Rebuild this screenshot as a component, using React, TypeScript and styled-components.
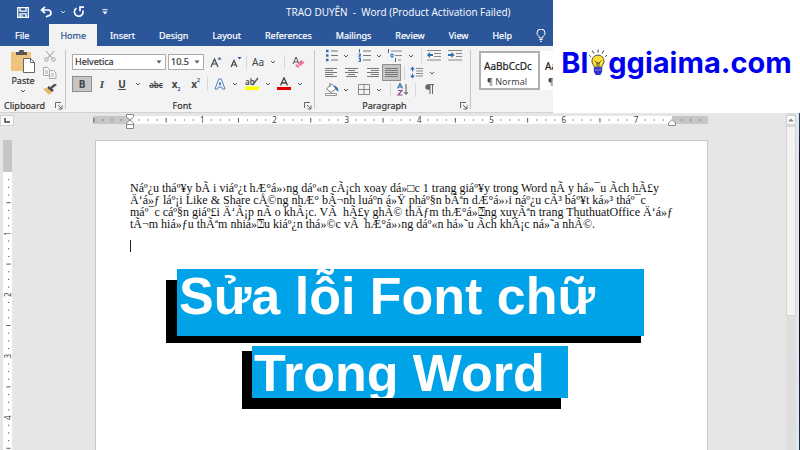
import React from 'react';
import styled, { createGlobalStyle, css } from 'styled-components';

const Global = createGlobalStyle`
  *, *::before, *::after { box-sizing: border-box; }
  html, body, #root { height: 100%; }
  body {
    margin: 0;
    overflow: hidden;
    background: #e6e6e6;
    font-family: "Noto Sans", "Open Sans", sans-serif;
    font-size: 9px;
    color: #444;
  }
  button, select, a { font: inherit; color: inherit; }
  h1, h2, p { margin: 0; }
`;

const Shell = styled.div`
  display: flex;
  flex-direction: column;
  min-height: 100vh;
`;

const Header = styled.header`
  display: grid;
  grid-template-columns: minmax(0, 1fr) 247px;
`;

const WordChrome = styled.div`
  display: flex;
  flex-direction: column;
  overflow: hidden;
`;

const TitleBar = styled.div`
  display: flex;
  align-items: center;
  height: 24px;
  padding-left: 16px;
  background: #2b579a;
  color: #fff;
`;

const Quick = styled.button<{ $w: number }>`
  display: flex;
  justify-content: center;
  align-items: center;
  flex: none;
  width: ${(p) => p.$w}px;
  height: 16px;
  padding: 0;
  border: 0;
  background: none;
  & > svg { flex: none; }
`;

const WindowTitle = styled.h1`
  margin-left: 169px;
  font-family: "Open Sans", sans-serif;
  font-size: 10px;
  font-weight: 400;
  line-height: 12px;
  white-space: pre;
`;

const Tabs = styled.nav`
  display: flex;
  height: 22px;
  padding-left: 4px;
  background: #2b579a;
  color: #fff;
`;

const Tab = styled.a<{ $active?: boolean; $lead?: boolean }>`
  display: flex;
  align-items: center;
  flex: none;
  padding: 0 11px;
  margin-right: ${(p) => (p.$lead ? 9 : 2)}px;
  font-size: 9px;
  text-decoration: none;
  -webkit-text-stroke: 0.2px;
  ${(p) => p.$active && css`
    background: #f3f3f3;
    color: #2b579a;
  `}
`;

const Ribbon = styled.div`
  display: flex;
  height: 67px;
  background: #f3f3f3;
  border-bottom: 1px solid #d2d2d2;
`;

const Group = styled.section<{ $w: number }>`
  display: flex;
  flex-direction: column;
  flex: none;
  width: ${(p) => p.$w}px;
  padding-top: 1px;
`;

const GroupDivider = styled.div`
  flex: none;
  width: 1px;
  margin: 4px 0 3px;
  background: #c6c6c6;
`;

const GroupBody = styled.div<{ $split?: boolean }>`
  display: flex;
  flex-direction: ${(p) => (p.$split ? 'row' : 'column')};
  height: 52px;
  padding-left: ${(p) => (p.$split ? 4 : 8)}px;
`;

const FontRows = styled(GroupBody)`
  gap: 6px;
  padding: 7px 0 0 6px;
`;

const GroupFoot = styled.div`
  display: grid;
  grid-template-columns: minmax(0, 1fr) 16px;
  align-items: center;
  height: 13px;
  font-size: 9px;
  text-align: center;
  color: #333;
  -webkit-text-stroke: 0.2px;
  & > svg { justify-self: end; margin-right: 2px; }
`;

const Row = styled.div<{ $h: number }>`
  display: flex;
  align-items: center;
  flex: none;
  height: ${(p) => p.$h}px;
`;

const Tool = styled.button<{ $w: number; $on?: boolean }>`
  display: flex;
  justify-content: center;
  align-items: center;
  flex: none;
  width: ${(p) => p.$w}px;
  height: 100%;
  padding: 0;
  border: ${(p) => (p.$on ? '1px solid #8e8e8e' : '0')};
  background: ${(p) => (p.$on ? '#c6c6c6' : 'none')};
  color: #444;
`;

const Sep = styled.span<{ $before?: number }>`
  flex: none;
  width: 1px;
  height: 14px;
  margin-left: ${(p) => p.$before ?? 0}px;
  background: #d6d6d6;
`;

const Field = styled.label<{ $w: number }>`
  display: flex;
  align-items: center;
  flex: none;
  width: ${(p) => p.$w}px;
  height: 16px;
  margin-right: 2px;
  padding-right: 3px;
  border: 1px solid #ababab;
  background: #fff;
`;

const Picker = styled.select`
  flex: 1;
  min-width: 0;
  height: 14px;
  padding: 0 0 0 2px;
  border: 0;
  appearance: none;
  background: none;
  font-size: 9px;
  line-height: 14px;
  color: #333;
  -webkit-text-stroke: 0.2px;
`;

const PasteButton = styled.button`
  display: flex;
  flex-direction: column;
  align-items: center;
  width: 38px;
  padding: 3px 0 0;
  border: 0;
  background: none;
  font-size: 9px;
  line-height: 14px;
  color: #333;
  -webkit-text-stroke: 0.2px;
`;

const ClipTools = styled.div`
  display: flex;
  flex-direction: column;
  width: 18px;
`;

const Gallery = styled.div`
  display: flex;
  flex: 1;
  min-width: 0;
  padding: 5px 0 22px 8px;
  overflow: hidden;
`;

const StyleCard = styled.button<{ $active?: boolean }>`
  flex: none;
  width: 61px;
  padding: 0 3px;
  overflow: hidden;
  border: 2px solid ${(p) => (p.$active ? '#b0b0b0' : '#fff')};
  background: #fff;
  text-align: left;
  color: #222;
`;

const Sample = styled.span`
  display: block;
  overflow: hidden;
  padding-top: 5px;
  font-size: 10px;
  line-height: 16px;
  white-space: nowrap;
  -webkit-text-stroke: 0.2px;
`;

const StyleName = styled.span`
  display: block;
  padding-left: 3px;
  font-size: 9px;
  line-height: 15px;
  white-space: nowrap;
  color: #444;
`;

const Brand = styled.a`
  display: flex;
  align-items: center;
  justify-content: center;
  padding-top: 12px;
  background: #fff;
  color: #0000f0;
  font-family: Inter, sans-serif;
  font-size: 29px;
  font-weight: 700;
  line-height: 32px;
  text-decoration: none;
`;

const Workspace = styled.main`
  display: grid;
  grid-template-columns: 15px minmax(0, 1fr) 10px 3px 1px;
  flex: 1;
  min-height: 0;
  background: #e6e6e6;
`;

const Gutter = styled.div`
  display: flex;
  flex-direction: column;
  gap: 14px;
  padding-top: 2px;
`;

const TabStop = styled.button`
  display: flex;
  align-items: center;
  justify-content: center;
  width: 14px;
  height: 11px;
  padding: 0;
  border: 1px solid #d0d0d0;
  background: #fbfbfb;
`;

const SideRuler = styled.div`
  width: 9px;
  height: 310px;
  margin-left: 3px;
  border-top: 32px solid #c6c6c6;
  background: #fff;
`;

const Canvas = styled.div`
  display: flex;
  flex-direction: column;
  gap: 13px;
  padding: 3px 78px 0 78px;
`;

const TopRuler = styled.div`
  display: grid;
  grid-template-columns: 37px minmax(0, 1fr) 36px;
  height: 11px;
  padding-bottom: 2px;
`;

const RulerPart = styled.div<{ $edge?: boolean }>`
  display: flex;
  height: 8px;
  background: ${(p) => (p.$edge ? '#c6c6c6' : '#fff')};
  & > svg { flex: none; overflow: visible; }
`;

const Page = styled.article`
  flex: 1;
  margin-left: 2px;
  padding: 41px 34px 0 34px;
  border: 1px solid #c9c9c9;
  border-bottom: 0;
  background: #fff;
`;

const Garbled = styled.p`
  font-family: "Liberation Serif", "DejaVu Sans", serif;
  font-size: 12px;
  line-height: 12px;
  color: #111;
`;

const Line = styled.span`
  display: block;
  white-space: nowrap;
`;

const Caret = styled.div`
  width: 1px;
  height: 12px;
  margin-top: 10px;
  background: #222;
`;

const Banner = styled.h2`
  display: flex;
  flex-direction: column;
  align-items: center;
  gap: 10px;
  margin-top: 17px;
  padding-left: 17px;
  font-family: "Liberation Sans", Arial, sans-serif;
  font-size: 52px;
  font-weight: 700;
  line-height: 54px;
  color: #fff;
`;

const Plate = styled.span<{ $second?: boolean }>`
  position: relative;
  z-index: 0;
  flex: none;
  width: ${(p) => (p.$second ? 316 : 467)}px;
  height: ${(p) => (p.$second ? 52 : 67)}px;
  margin-left: ${(p) => (p.$second ? 0 : 1)}px;
  white-space: nowrap;

  &::before, &::after {
    content: "";
    position: absolute;
    z-index: -1;
  }
  &::before {
    background: #000;
    inset: ${(p) => (p.$second ? '5px 7px -11px -10px' : '11px 3px -7px -11px')};
  }
  &::after {
    background: #00a2e8;
    inset: 0;
  }
`;

const PlateText = styled.span`
  display: block;
  height: 100%;
  padding-left: 2px;
  overflow: hidden;
`;

const Scrollbar = styled.div`
  display: flex;
  flex-direction: column;
  gap: 1px;
  padding-top: 2px;
  background: #dedede;
`;

const ScrollUp = styled.button`
  display: flex;
  align-items: center;
  justify-content: center;
  height: 10px;
  padding: 0;
  border: 1px solid #d0d0d0;
  background: #fbfbfb;
`;

const Thumb = styled.div`
  height: 190px;
  border: 1px solid #d4d4d4;
  background: #f3f3f3;
`;

const Desktop = styled.div`
  grid-column: 5;
  background: linear-gradient(#1c3f7c, #06132f 14%, #06132f 70%, #15366b);
`;

const Chev = ({ w = 8 }: { w?: number }) => (
  <Tool $w={w} aria-label="More options">
    <svg width="6" height="6" viewBox="0 0 6 6"><path d="M1 2l2 2 2-2" fill="none" stroke="#555" /></svg>
  </Tool>
);

const Drop = () => (
  <svg width="6" height="6" viewBox="0 0 6 6"><path d="M.5 1.5h5L3 4.5z" fill="#555" /></svg>
);

const Launcher = () => (
  <svg width="8" height="8" viewBox="0 0 8 8" fill="none" stroke="#666">
    <path d="M.5 6V.5H6M3 3l4 4M7 3.500V7H3.500" />
  </svg>
);

const GroupLabel = ({ children }: { children: string }) => (
  <GroupFoot><span>{children}</span><Launcher /></GroupFoot>
);

const Lines = ({ xs }: { xs: [number, number][] }) => (
  <svg width="13" height="11" viewBox="0 0 13 11" stroke="#777">
    {xs.map(([a, b], i) => <path key={i} d={`M${a} ${1.5 + i * 2}H${b}`} />)}
  </svg>
);

const full: [number, number] = [0, 13];

const INCH = 72.3;
const VINCH = 61.4;

const Ticks = ({ from, to }: { from: number; to: number }) => {
  const marks = [];
  for (let i = from; i <= to; i++) {
    const x = (i * INCH) / 8;
    if (i % 8 === 0) {
      if (i > 0) marks.push(<text key={i} x={x} y="7" textAnchor="middle" fontSize="8" fill="#444">{i / 8}</text>);
    } else if (i % 4 === 0) marks.push(<path key={i} d={`M${x} 2v4.500`} stroke="#555" />);
    else marks.push(<path key={i} d={`M${x - 0.5} 4h1.200`} stroke="#555" />);
  }
  return <>{marks}</>;
};

const SideTicks = () => {
  const marks = [];
  for (let i = 1; i <= 36; i++) {
    const y = (i * VINCH) / 8;
    if (i % 8 === 0) {
      marks.push(
        <text key={i} x="0" y="0" transform={`translate(8 ${y}) rotate(-90)`} textAnchor="middle" fontSize="8" fill="#444">{i / 8}</text>,
      );
    } else if (i % 4 === 0) marks.push(<path key={i} d={`M3.500 ${y}h4`} stroke="#555" />);
    else marks.push(<path key={i} d={`M5 ${y}h1.200`} stroke="#555" />);
  }
  return <svg width="9" height="278" viewBox="0 0 9 278">{marks}</svg>;
};

const Bulb = () => (
  <svg width="20" height="27" viewBox="0 0 20 29" aria-label="o">
    <g stroke="#333" strokeWidth="1" fill="none" strokeLinecap="round">
      <path d="M5.500 4.500L4 2M10 3.500V1M14.500 4.500L16 2M2 8L.8 7M18 8l1.200-1" />
    </g>
    <path d="M10 6.500a6.500 6.500 0 0 0-6.500 6.500c0 3 2 4 2.600 6.500h7.800c.6-2.500 2.600-3.500 2.600-6.500A6.500 6.500 0 0 0 10 6.500z" fill="#ffe02e" stroke="#444" />
    <path d="M9 19v-4L6.500 12.500M11 19v-4l2.500-2.500M8 15h4" stroke="#444" fill="none" />
    <path d="M5.500 19.500h9v5L12.500 28h-5L5.500 24.500z" fill="#2f35c8" />
    <path d="M6.500 22.500h7" stroke="#8c90f0" />
  </svg>
);

const tabs = ['Insert', 'Design', 'Layout', 'References', 'Mailings', 'Review', 'View', 'Help'];

const text = [
  'Náº¿u tháº¥y bÃ\u00a0i viáº¿t hÆ°á»›ng dáº«n cÃ¡ch xoay dá»□c 1 trang giáº¥y trong Word nÃ\u00a0y há»¯u Ãch hÃ£y',
  'Ä‘á»ƒ láº¡i Like & Share cÅ©ng nhÆ° bÃ¬nh luáºn á»Ÿ pháº§n bÃªn dÆ°á»›i náº¿u cÃ³ báº¥t ká»³ tháº¯c',
  'máº¯c cáº§n giáº£i Ä‘Ã¡p nÃ\u00a0o khÃ¡c. VÃ\u00a0 hÃ£y ghÃ© thÄƒm thÆ°á»⍰ng xuyÃªn trang ThuthuatOffice Ä‘á»ƒ',
  'tÃ¬m hiá»ƒu thÃªm nhiá»⍰u kiáº¿n thá»©c vÃ\u00a0 hÆ°á»›ng dáº«n há»˜u Ãch khÃ¡c ná»˜a nhÃ©.',
];

function ClipboardGroup() {
  return (
    <Group $w={65}>
      <GroupBody $split>
        <PasteButton>
          <svg width="24" height="24" viewBox="0 0 24 24">
            <rect x="0" y="2" width="20" height="19" fill="#eec47c" />
            <path d="M5 5V2h3a2.500 2.500 0 0 1 5 0h3v3z" fill="#555" />
            <path d="M12.500 8.500h7l4 4v10h-11z" fill="#fff" stroke="#666" />
            <path d="M19.500 8.500v4h4" fill="none" stroke="#666" />
          </svg>
          Paste
          <svg width="6" height="6" viewBox="0 0 6 6"><path d="M1 2l2 2 2-2" fill="none" stroke="#555" /></svg>
        </PasteButton>
        <ClipTools>
          <Row $h={17}>
            <Tool $w={16} aria-label="Cut">
              <svg width="12" height="12" viewBox="0 0 12 12" fill="none" stroke="#999">
                <path d="M2 1l6 7M10 1L4 8" /><circle cx="2.500" cy="9.500" r="1.700" /><circle cx="9.500" cy="9.500" r="1.700" />
              </svg>
            </Tool>
          </Row>
          <Row $h={17}>
            <Tool $w={16} aria-label="Copy">
              <svg width="14" height="12" viewBox="0 0 14 12" fill="#f8f8f8" stroke="#aaa">
                <path d="M.5.5h4l2 2v6h-6zM6.500 3.500h4l2.500 2.500v5.500h-6.500z" /><path d="M8 7h3M8 9h3M2 4h3M2 6h3" />
              </svg>
            </Tool>
          </Row>
          <Row $h={17}>
            <Tool $w={16} aria-label="Format painter">
              <svg width="14" height="11" viewBox="0 0 14 11">
                <path d="M0 5l4-1 5 4-3 3C4 9 2 7 0 5z" fill="#e9b765" /><path d="M5 3l5 4" stroke="#444" strokeWidth="2.500" /><path d="M8 4l5-4" stroke="#555" strokeWidth="2.500" />
              </svg>
            </Tool>
          </Row>
        </ClipTools>
      </GroupBody>
      <GroupLabel>Clipboard</GroupLabel>
    </Group>
  );
}

function FontGroup() {
  return (
    <Group $w={248}>
      <FontRows>
        <Row $h={16}>
          <Field $w={94}>
            <Picker aria-label="Font" defaultValue="Helvetica"><option>Helvetica</option></Picker><Drop />
          </Field>
          <Field $w={36}>
            <Picker aria-label="Font size" defaultValue="10.5"><option>10.5</option></Picker><Drop />
          </Field>
          <Tool $w={20} aria-label="Grow font">
            <svg width="12" height="12" viewBox="0 0 12 12"><path d="M1 11l3.500-8L8 11M2.200 8h4.600" fill="none" stroke="#444" strokeWidth="1.200" /><path d="M7.500 3.500h4l-2-2.500z" fill="#2b579a" /></svg>
          </Tool>
          <Tool $w={20} aria-label="Shrink font">
            <svg width="12" height="12" viewBox="0 0 12 12"><path d="M1 11l3-6.500L7 11M2 9h4" fill="none" stroke="#444" strokeWidth="1.200" /><path d="M7.500 1h4l-2 2.500z" fill="#2b579a" /></svg>
          </Tool>
          <Sep />
          <Change $w={22}>Aa</Change>
          <Chev />
          <Sep $before={7} />
          <Tool $w={26} aria-label="Clear formatting">
            <svg width="13" height="13" viewBox="0 0 13 13"><path d="M1 8l3-7 3 7M2 6h4" fill="none" stroke="#555" /><path d="M3 9.500L9.500 4 12.500 6.500 6 12z" fill="#e8788f" /><path d="M5 7.800l3 2.500" stroke="#fff" /></svg>
          </Tool>
        </Row>
        <Row $h={16}>
          <Letter $w={20} $on $bold>B</Letter>
          <Letter $w={20} $italic>I</Letter>
          <Letter $w={20} $bold $under>U</Letter>
          <Chev w={12} />
          <Strike $w={24}>abc</Strike>
          <Script $w={16} aria-label="Subscript">x<sub>2</sub></Script>
          <Script $w={23} aria-label="Superscript">x<sup>2</sup></Script>
          <Sep />
          <Tool $w={23} aria-label="Text effects">
            <svg width="12" height="12" viewBox="0 0 12 12"><path d="M1 11L4.800 1h2.400L11 11H8.500l-.8-2H4.300l-.8 2zM5 6.800h2L6 4z" fill="#fff" stroke="#4a7ebb" /></svg>
          </Tool>
          <Chev />
          <Tool $w={25} aria-label="Highlight">
            <svg width="14" height="14" viewBox="0 0 14 14"><text x="0" y="7.500" fontSize="8" fontWeight="600" fill="#444">ab</text><path d="M13 1L7.500 8" stroke="#555" strokeWidth="1.500" /><path d="M0 9.500h14v3.500H0z" fill="#ffff00" /></svg>
          </Tool>
          <Chev />
          <Tool $w={24} aria-label="Font colour">
            <svg width="14" height="14" viewBox="0 0 14 14"><path d="M3.500 8.500L7 .8l3.500 7.700M5 6h4" fill="none" stroke="#444" strokeWidth="1.300" /><path d="M0 10h14v3H0z" fill="#e00000" /></svg>
          </Tool>
          <Chev />
        </Row>
      </FontRows>
      <GroupLabel>Font</GroupLabel>
    </Group>
  );
}

const Letter = styled(Tool)<{ $bold?: boolean; $italic?: boolean; $under?: boolean }>`
  font-family: ${(p) => (p.$italic ? '"Liberation Serif", serif' : 'inherit')};
  font-size: ${(p) => (p.$italic ? 11 : 10)}px;
  font-style: ${(p) => (p.$italic ? 'italic' : 'normal')};
  font-weight: 700;
  text-decoration: ${(p) => (p.$under ? 'underline' : 'none')};
`;

const Change = styled(Tool)`
  font-size: 10px;
`;

const Strike = styled(Tool)`
  font-size: 8px;
  font-weight: 600;
  text-decoration: line-through;
`;

const Script = styled(Tool)`
  font-size: 10px;
  font-weight: 700;
  sub, sup { font-size: 5px; line-height: 5px; color: #2b579a; }
  sub { align-self: flex-end; }
  sup { align-self: flex-start; padding-top: 2px; }
`;

function ParagraphGroup() {
  return (
    <Group $w={155}>
      <GroupBody>
        <Row $h={17}>
          <Tool $w={17} aria-label="Bullets">
            <svg width="12" height="13" viewBox="0 0 12 13"><path d="M0 2h2.500M0 6.500h2.500M0 11h2.500" stroke="#2b70b0" strokeWidth="2.500" /><path d="M5 2h7M5 6.500h7M5 11h7" stroke="#777" /></svg>
          </Tool>
          <Chev w={12} />
          <Tool $w={24} aria-label="Numbering">
            <svg width="13" height="13" viewBox="0 0 13 13"><path d="M1.500 0v3.500M.5 5h2v1.500h-1.500v1.500h2M.5 9.500h2v3h-2M1 11h1.500" fill="none" stroke="#2b70b0" /><path d="M5 2h8M5 6.500h8M5 11h8" stroke="#777" /></svg>
          </Tool>
          <Chev w={6} />
          <Tool $w={25} aria-label="Multilevel list">
            <svg width="15" height="13" viewBox="0 0 15 13"><path d="M1.500 0v4M4 5h2v3H4zM8.500 9v4" fill="none" stroke="#2b70b0" /><path d="M4 2h11M8 6.500h7M11 11h3" stroke="#888" /></svg>
          </Tool>
          <Chev />
          <Sep $before={6} />
          <Tool $w={24} aria-label="Decrease indent">
            <svg width="14" height="11" viewBox="0 0 14 11"><path d="M0 .5h14M7 3.500h7M7 6.500h7M0 10h14" stroke="#888" /><path d="M6 5H2" stroke="#2b70b0" strokeWidth="2" /><path d="M0 5l3-3v6z" fill="#2b70b0" /></svg>
          </Tool>
          <Tool $w={18} aria-label="Increase indent">
            <svg width="14" height="11" viewBox="0 0 14 11"><path d="M0 .5h14M8 3.500h6M8 6.500h6M0 10h14" stroke="#888" /><path d="M0 5h4" stroke="#2b70b0" strokeWidth="2" /><path d="M6.500 5l-3-3v6z" fill="#2b70b0" /></svg>
          </Tool>
        </Row>
        <Row $h={17}>
          <Tool $w={17} aria-label="Align left"><Lines xs={[[0, 12], [0, 8], [0, 12], [0, 8], [0, 12]]} /></Tool>
          <Tool $w={22} aria-label="Centre"><Lines xs={[full, [3, 10], full, [3, 10], [1, 12]]} /></Tool>
          <Tool $w={20} aria-label="Align right"><Lines xs={[[1, 13], [5, 13], [1, 13], [5, 13], [1, 13]]} /></Tool>
          <Tool $w={19} $on aria-label="Justify"><Lines xs={[full, full, full, full, full]} /></Tool>
          <Sep $before={3} />
          <Tool $w={23} aria-label="Line spacing">
            <svg width="13" height="13" viewBox="0 0 13 13"><path d="M2.500 2v9" stroke="#2b70b0" strokeDasharray="3.500 2" /><path d="M0 3.500L2.500.5 5 3.500zM0 9.500l2.500 3 2.500-3z" fill="#2b70b0" /><path d="M6 2.500h7M6 5h7M6 7.500h7M6 10h7" stroke="#888" /></svg>
          </Tool>
          <Chev />
        </Row>
        <Row $h={17}>
          <Tool $w={17} aria-label="Shading">
            <svg width="14" height="13" viewBox="0 0 14 13"><path d="M1.500 6l5-5 4.500 4.500-5 4z" fill="#fff" stroke="#777" /><path d="M5 0v4" stroke="#777" /><path d="M9.500 3c2 .5 3 2 3.500 5-1.500-.5-2-2-3.500-5z" fill="#2b70b0" stroke="#2b70b0" /><path d="M.5 10.500h11v2H.5z" fill="#fff" stroke="#999" /></svg>
          </Tool>
          <Chev w={12} />
          <Tool $w={24} aria-label="Borders">
            <svg width="12" height="11" viewBox="0 0 12 11" fill="none" stroke="#888"><path d="M.5.5h11v10H.5zM6 0v11M0 5.500h12" /></svg>
          </Tool>
          <Chev w={6} />
          <Sep $before={8} />
          <Tool $w={24} aria-label="Sort">
            <svg width="12" height="13" viewBox="0 0 12 13" fill="none"><path d="M.5 5.500L3 .5l2.500 5M1.500 4h3" stroke="#2b70b0" strokeWidth="1.200" /><path d="M1 7.500h4L1 12h4.500" stroke="#8a4a9c" strokeWidth="1.200" /><path d="M9 1v10M7 9l2 2.500L11 9" stroke="#555" /></svg>
          </Tool>
          <Sep />
          <Tool $w={26} aria-label="Show marks">
            <svg width="9" height="11" viewBox="0 0 9 11"><path d="M4 .5h5M5 0v10M7.500 0v10" stroke="#666" /><path d="M5 .3H3a2.700 2.700 0 0 0 0 5.400h2z" fill="#666" /></svg>
          </Tool>
        </Row>
      </GroupBody>
      <GroupLabel>Paragraph</GroupLabel>
    </Group>
  );
}

export default function App() {
  return (
    <Shell>
      <Global />
      <Header>
        <WordChrome>
          <TitleBar>
            <Quick $w={14} aria-label="Save">
              <svg width="12" height="11" viewBox="0 0 12 11"><path d="M.7.7h10.600v9.600H.7zM3 .7v3.500h6V.7M3 10V6.800h6V10M5 8v2" fill="none" stroke="#fff" strokeWidth="1.300" /></svg>
            </Quick>
            <Quick $w={31} aria-label="Undo">
              <svg width="12" height="12" viewBox="0 0 12 12" fill="none" stroke="#fff" strokeWidth="1.700"><path d="M5 .8L1.500 4 5 7.200M1.500 4H8a2.800 2.800 0 0 1 0 5.800L6 11" /></svg>
            </Quick>
            <Quick $w={4} aria-label="Undo list">
              <svg width="6" height="6" viewBox="0 0 6 6"><path d="M1 2l2 2 2-2" fill="none" stroke="#cfdcf0" /></svg>
            </Quick>
            <Quick $w={28} aria-label="Repeat">
              <svg width="12" height="12" viewBox="0 0 12 12" fill="none" stroke="#fff" strokeWidth="1.700"><path d="M3.500 2.300A4.300 4.300 0 1 0 9.800 4.500M7 5.200V1.200h4" /></svg>
            </Quick>
            <Quick $w={24} aria-label="Customise toolbar">
              <svg width="6" height="6" viewBox="0 0 6 6"><path d="M.5.700h5" stroke="#fff" /><path d="M.5 2.500h5L3 5.500z" fill="#fff" /></svg>
            </Quick>
            <WindowTitle>{'TRAO DUYÊN  -  Word (Product Activation Failed)'}</WindowTitle>
          </TitleBar>
          <Tabs>
            <Tab href="#file" $lead>File</Tab>
            <Tab href="#home" $active>Home</Tab>
            {tabs.map((t) => <Tab key={t} href={`#${t}`}>{t}</Tab>)}
            <Tab href="#tell" aria-label="Tell me">
              <svg width="10" height="13" viewBox="0 0 10 13" fill="none" stroke="#fff"><path d="M3.500 9C3.500 7 1 6.500 1 4a4 4 0 0 1 8 0c0 2.500-2.500 3-2.500 5zM3.500 10.500h3M4 12.300h2" /></svg>
            </Tab>
          </Tabs>
          <Ribbon>
            <ClipboardGroup />
            <GroupDivider />
            <FontGroup />
            <GroupDivider />
            <ParagraphGroup />
            <GroupDivider />
            <Gallery>
              <StyleCard $active><Sample>AaBbCcDc</Sample><StyleName>¶ Normal</StyleName></StyleCard>
              <StyleCard><Sample>Aa</Sample><StyleName>¶ N</StyleName></StyleCard>
            </Gallery>
          </Ribbon>
        </WordChrome>
        <Brand href="#home"><span>Bl</span><Bulb /><span>ggiaima.com</span></Brand>
      </Header>
      <Workspace>
        <Gutter>
          <TabStop aria-label="Tab stop">
            <svg width="6" height="5" viewBox="0 0 6 5"><path d="M1 0v4h5" fill="none" stroke="#444" strokeWidth="1.500" /></svg>
          </TabStop>
          <SideRuler><SideTicks /></SideRuler>
        </Gutter>
        <Canvas>
          <TopRuler>
            <RulerPart $edge><svg width="37" height="8" viewBox="-37 0 37 8"><Ticks from={-4} to={-1} /></svg></RulerPart>
            <RulerPart>
              <svg width="543" height="8" viewBox="0 0 543 8">
                <Ticks from={1} to={59} />
                <path d="M-3.500-1.500h7v2.500L0 4l3.500 3v5.500h-7V7L0 4l-3.500-3zM-3.500 8.500h7" fill="#fff" stroke="#888" />
              </svg>
            </RulerPart>
            <RulerPart $edge>
              <svg width="36" height="8" viewBox="0 0 36 8">
                <path d="M9 4h1.200M18 4h1.200M27 4h1.200" stroke="#555" />
                <path d="M-3.500 9.500V7L0 3.500 3.500 7v2.500z" fill="#fff" stroke="#888" />
              </svg>
            </RulerPart>
          </TopRuler>
          <Page>
            <Garbled>{text.map((l) => <Line key={l}>{l}</Line>)}</Garbled>
            <Caret />
            <Banner>
              <Plate><PlateText>Sửa lỗi Font chữ</PlateText></Plate>
              <Plate $second><PlateText>Trong Word</PlateText></Plate>
            </Banner>
          </Page>
        </Canvas>
        <Scrollbar>
          <ScrollUp aria-label="Scroll up">
            <svg width="6" height="4" viewBox="0 0 6 4"><path d="M0 3.500L3 .5l3 3z" fill="#888" /></svg>
          </ScrollUp>
          <Thumb />
        </Scrollbar>
        <Desktop />
      </Workspace>
    </Shell>
  );
}
